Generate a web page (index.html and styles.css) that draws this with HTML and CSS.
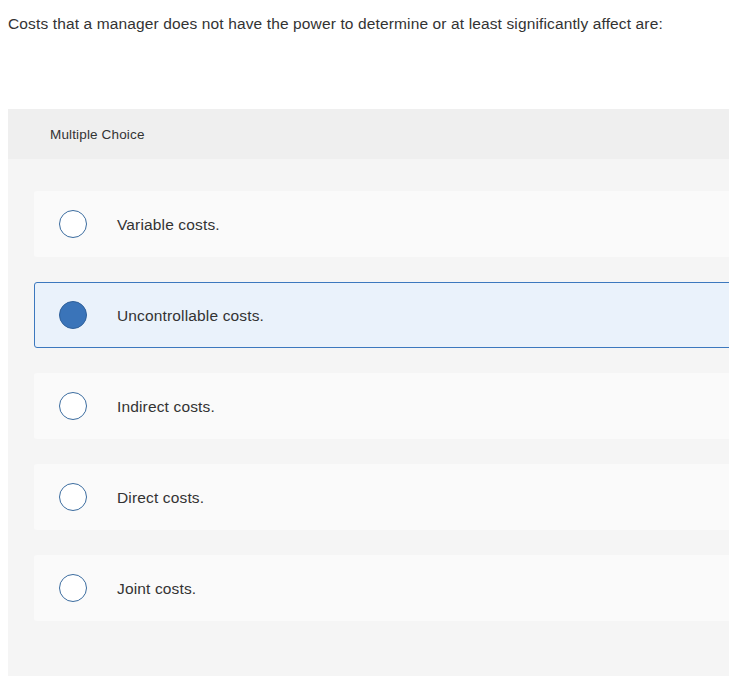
FILE: index.html
```html
<!DOCTYPE html>
<html>
<head>
<meta charset="utf-8">
<link rel="stylesheet" href="styles.css">
</head>
<body>
<div class="page">
  <p class="question">Costs that a manager does not have the power to determine or at least significantly affect are:</p>
  <div class="quiz">
    <div class="quiz-header">Multiple Choice</div>
    <div class="options">
      <div class="option"><span class="radio"></span><span class="label">Variable costs.</span></div>
      <div class="option selected"><span class="radio"></span><span class="label">Uncontrollable costs.</span></div>
      <div class="option"><span class="radio"></span><span class="label">Indirect costs.</span></div>
      <div class="option"><span class="radio"></span><span class="label">Direct costs.</span></div>
      <div class="option"><span class="radio"></span><span class="label">Joint costs.</span></div>
    </div>
  </div>
</div>
</body>
</html>
```
FILE: styles.css
```css
html, body {
  margin: 0;
  padding: 0;
  overflow: hidden;
  background: #fff;
}
body {
  font-family: "Liberation Sans", Arial, sans-serif;
  color: #333;
}
.page {
  padding-left: 8px;
}
.question {
  margin: 0;
  padding-top: 14px;
  font-size: 15.5px;
  letter-spacing: 0.13px;
  line-height: 20px;
  color: #333;
}
.quiz {
  margin-top: 75px;
  overflow: hidden;
}
.quiz-header {
  height: 50px;
  display: flex;
  align-items: center;
  padding-left: 42px;
  background: #efefef;
  font-size: 13.5px;
  letter-spacing: 0.15px;
  color: #333;
}
.options {
  background: #f5f5f5;
  padding: 32px 0 55px 26px;
  display: flex;
  flex-direction: column;
  gap: 25px;
}
.option {
  box-sizing: border-box;
  height: 66px;
  margin-right: -10px;
  display: flex;
  align-items: center;
  padding-left: 24px;
  background: #fafafa;
  border: 1px solid transparent;
  border-radius: 3px;
  font-size: 15.5px;
  letter-spacing: 0.15px;
}
.option.selected {
  background: #eaf2fb;
  border-color: #3c78be;
}
.radio {
  box-sizing: border-box;
  width: 28px;
  height: 28px;
  border-radius: 50%;
  border: 1.5px solid #3b6c9f;
  background: #fff;
  flex: none;
}
.selected .radio {
  background: #3a74b9;
  border-color: #2f609a;
}
.label {
  margin-left: 30px;
  padding-top: 2px;
  color: #333;
}
```
